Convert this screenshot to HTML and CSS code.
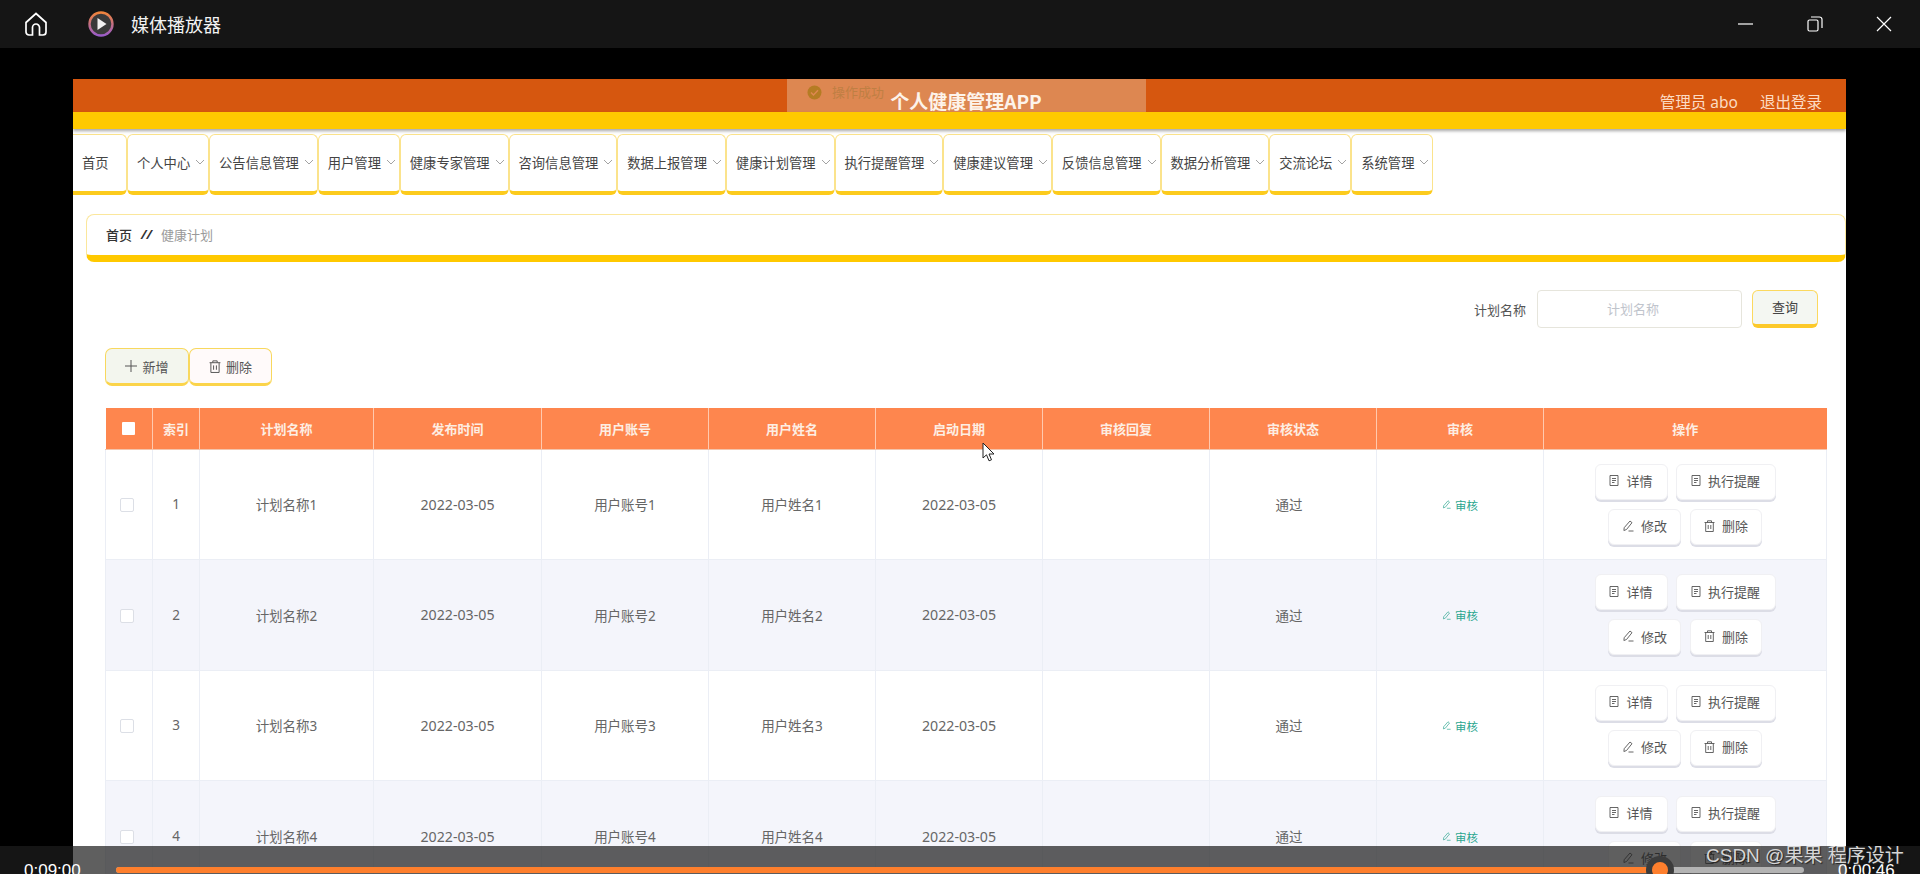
FILE: index.html
```html
<!DOCTYPE html>
<html>
<head>
    <meta charset="utf-8">
    <title>媒体播放器</title>
    <link rel="stylesheet" href="styles.css">
</head>
<body>
<svg class="sprite" width="0" height="0">
    <symbol id="doc" viewBox="0 0 10 11"><path d="M1 .5h8v10H1zM3 3.500h4M3 5.500h4M3 7.500h2.500" fill="none" stroke="currentColor" stroke-width=".9"/></symbol>
    <symbol id="pen" viewBox="0 0 12 12"><path d="M8 1l2 1.700-5.500 6.800-2.600 1 .3-2.800zM6.500 11h5" fill="none" stroke="currentColor" stroke-width=".9"/></symbol>
    <symbol id="bin" viewBox="0 0 11 12"><path d="M.5 2.500h10M3.500 2.500V.8h4v1.700M1.700 2.500v9h7.600v-9M4.200 5v4M6.800 5v4" fill="none" stroke="currentColor" stroke-width=".9"/></symbol>
    <symbol id="arrow" viewBox="0 0 10 6"><path d="M1 1l4 4 4-4" fill="none" stroke="currentColor" stroke-width=".9"/></symbol>
</svg>

<div class="titlebar">
    <svg class="home" width="24" height="24" viewBox="0 0 24 24"><path d="M2 10.500L12 1.500l10 9V20a3 3 0 0 1-3 3h-3.500v-7.500a3.500 3.500 0 0 0-7 0V23H5a3 3 0 0 1-3-3z" fill="none" stroke="#fff" stroke-width="1.700"/></svg>
    <svg class="logo" width="26" height="26" viewBox="0 0 26 26">
        <defs><linearGradient id="ring" x1="0" y1="0" x2="0" y2="1"><stop offset="0" stop-color="#f0843c"/><stop offset="1" stop-color="#9a5cc8"/></linearGradient></defs>
        <circle cx="13" cy="13" r="11.500" fill="#3a3a3a" stroke="url(#ring)" stroke-width="2.400"/>
        <path d="M9.500 7l9 6-9 6z" fill="#f2f2f2"/>
    </svg>
    <span class="apptitle">媒体播放器</span>
    <div class="winbtns">
        <svg width="16" height="16" viewBox="0 0 16 16"><path d="M0 8h15" stroke="#fff" stroke-width="1.200"/></svg>
        <svg width="16" height="16" viewBox="0 0 16 16"><path d="M1 5.500a1.500 1.500 0 0 1 1.500-1.500h7A1.500 1.500 0 0 1 11 5.500v8a1.500 1.500 0 0 1-1.500 1.500h-7A1.500 1.500 0 0 1 1 13.500zM4 1h8.500A2.500 2.500 0 0 1 15 3.500V12" fill="none" stroke="#fff" stroke-width="1.200"/></svg>
        <svg width="16" height="16" viewBox="0 0 16 16"><path d="M1 1l14 14M15 1L1 15" stroke="#fff" stroke-width="1.200"/></svg>
    </div>
</div>

<div class="page">
    <div class="header">
        <div class="toast">
            <svg width="15" height="15" viewBox="0 0 15 15"><circle cx="7.500" cy="7.500" r="7" fill="#b57c24"/><path d="M4 7.500l2.500 2.500L11 5.300" fill="none" stroke="#de8851" stroke-width="1.500"/></svg>
            <span>操作成功</span>
        </div>
        <div class="apphead">个人健康管理APP</div>
        <div class="userinfo">
            <span>管理员 abo</span>
            <span>退出登录</span>
        </div>
    </div>
    <div class="yellowbar"></div>

    <div class="nav">
        <div class="navitem first">首页</div>
        <div class="navitem">个人中心<svg class="caret"><use href="#arrow"/></svg></div>
        <div class="navitem">公告信息管理<svg class="caret"><use href="#arrow"/></svg></div>
        <div class="navitem">用户管理<svg class="caret"><use href="#arrow"/></svg></div>
        <div class="navitem">健康专家管理<svg class="caret"><use href="#arrow"/></svg></div>
        <div class="navitem">咨询信息管理<svg class="caret"><use href="#arrow"/></svg></div>
        <div class="navitem">数据上报管理<svg class="caret"><use href="#arrow"/></svg></div>
        <div class="navitem">健康计划管理<svg class="caret"><use href="#arrow"/></svg></div>
        <div class="navitem">执行提醒管理<svg class="caret"><use href="#arrow"/></svg></div>
        <div class="navitem">健康建议管理<svg class="caret"><use href="#arrow"/></svg></div>
        <div class="navitem">反馈信息管理<svg class="caret"><use href="#arrow"/></svg></div>
        <div class="navitem">数据分析管理<svg class="caret"><use href="#arrow"/></svg></div>
        <div class="navitem">交流论坛<svg class="caret"><use href="#arrow"/></svg></div>
        <div class="navitem">系统管理<svg class="caret"><use href="#arrow"/></svg></div>
    </div>

    <div class="crumb">
        <b>首页</b><b class="sep">//</b><span>健康计划</span>
    </div>

    <div class="search">
        <label>计划名称</label>
        <input type="text" placeholder="计划名称">
        <button class="querybtn">查询</button>
    </div>

    <div class="actions">
        <button class="actbtn add"><svg width="12" height="12" viewBox="0 0 12 12"><path d="M6 0v12M0 6h12" stroke="currentColor" stroke-width="1"/></svg>新增</button>
        <button class="actbtn del"><svg width="12" height="13"><use href="#bin"/></svg>删除</button>
    </div>

    <table class="grid">
        <colgroup>
            <col class="c-check"><col class="c-index"><col class="c-name">
            <col class="c-first"><col class="c-std"><col class="c-std"><col class="c-std">
            <col class="c-std"><col class="c-std"><col class="c-std"><col class="c-ops">
        </colgroup>
        <thead>
            <tr>
                <th><span class="headcheck"></span></th>
                <th>索引</th><th>计划名称</th><th>发布时间</th><th>用户账号</th><th>用户姓名</th>
                <th>启动日期</th><th>审核回复</th><th>审核状态</th><th>审核</th><th>操作</th>
            </tr>
        </thead>
        <tbody>
            <tr>
                <td class="checkcell"><span class="rowcheck"></span></td>
                <td>1</td><td>计划名称1</td><td class="date">2022-03-05</td><td>用户账号1</td><td>用户姓名1</td>
                <td class="date">2022-03-05</td><td></td><td class="status">通过</td>
                <td><span class="audit"><svg width="9" height="9"><use href="#pen"/></svg>审核</span></td>
                <td><div class="ops">
                    <button class="opbtn w73"><svg width="10" height="11"><use href="#doc"/></svg>详情</button>
                    <button class="opbtn w100"><svg width="10" height="11"><use href="#doc"/></svg>执行提醒</button>
                    <button class="opbtn w73"><svg width="12" height="12"><use href="#pen"/></svg>修改</button>
                    <button class="opbtn w72"><svg width="11" height="12"><use href="#bin"/></svg>删除</button>
                </div></td>
            </tr>
            <tr>
                <td class="checkcell"><span class="rowcheck"></span></td>
                <td>2</td><td>计划名称2</td><td class="date">2022-03-05</td><td>用户账号2</td><td>用户姓名2</td>
                <td class="date">2022-03-05</td><td></td><td class="status">通过</td>
                <td><span class="audit"><svg width="9" height="9"><use href="#pen"/></svg>审核</span></td>
                <td><div class="ops">
                    <button class="opbtn w73"><svg width="10" height="11"><use href="#doc"/></svg>详情</button>
                    <button class="opbtn w100"><svg width="10" height="11"><use href="#doc"/></svg>执行提醒</button>
                    <button class="opbtn w73"><svg width="12" height="12"><use href="#pen"/></svg>修改</button>
                    <button class="opbtn w72"><svg width="11" height="12"><use href="#bin"/></svg>删除</button>
                </div></td>
            </tr>
            <tr>
                <td class="checkcell"><span class="rowcheck"></span></td>
                <td>3</td><td>计划名称3</td><td class="date">2022-03-05</td><td>用户账号3</td><td>用户姓名3</td>
                <td class="date">2022-03-05</td><td></td><td class="status">通过</td>
                <td><span class="audit"><svg width="9" height="9"><use href="#pen"/></svg>审核</span></td>
                <td><div class="ops">
                    <button class="opbtn w73"><svg width="10" height="11"><use href="#doc"/></svg>详情</button>
                    <button class="opbtn w100"><svg width="10" height="11"><use href="#doc"/></svg>执行提醒</button>
                    <button class="opbtn w73"><svg width="12" height="12"><use href="#pen"/></svg>修改</button>
                    <button class="opbtn w72"><svg width="11" height="12"><use href="#bin"/></svg>删除</button>
                </div></td>
            </tr>
            <tr>
                <td class="checkcell"><span class="rowcheck"></span></td>
                <td>4</td><td>计划名称4</td><td class="date">2022-03-05</td><td>用户账号4</td><td>用户姓名4</td>
                <td class="date">2022-03-05</td><td></td><td class="status">通过</td>
                <td><span class="audit"><svg width="9" height="9"><use href="#pen"/></svg>审核</span></td>
                <td><div class="ops">
                    <button class="opbtn w73"><svg width="10" height="11"><use href="#doc"/></svg>详情</button>
                    <button class="opbtn w100"><svg width="10" height="11"><use href="#doc"/></svg>执行提醒</button>
                    <button class="opbtn w73"><svg width="12" height="12"><use href="#pen"/></svg>修改</button>
                    <button class="opbtn w72"><svg width="11" height="12"><use href="#bin"/></svg>删除</button>
                </div></td>
            </tr>
        </tbody>
    </table>
</div>

<svg class="cursor" width="14" height="20" viewBox="0 0 14 20"><path d="M1 1v15l3.500-3.200 2.500 6 2.500-1-2.500-5.800h5z" fill="#fff" stroke="#222" stroke-width="1"/></svg>

<div class="controls">
    <span class="time start">0:09:00</span>
    <div class="track">
        <div class="fill"></div>
        <div class="thumb"></div>
    </div>
    <span class="time end">0:00:46</span>
    <div class="mark">CSDN @果果 程序设计</div>
</div>
</body>
</html>
```

FILE: styles.css
```css
*{
    box-sizing: border-box;
}
html, body{
    height: 874px;
    overflow: hidden;
}
body{
    margin: 0;
    background: #000;
    position: relative;
    font-family: "Noto Sans", "Noto Sans CJK SC", sans-serif;
    font-size: 13px;
}
button{
    font-family: inherit;
}
.sprite{
    position: absolute;
}

/* player title bar */
.titlebar{
    height: 48px;
    background: #151515;
    display: flex;
    align-items: center;
    padding-left: 24px;
}
.logo{
    margin-left: 40px;
}
.apptitle{
    margin-left: 17px;
    color: #f2f2f2;
    font-size: 18px;
    font-family: "Noto Sans CJK SC", sans-serif;
}
.winbtns{
    margin-left: auto;
    margin-right: 28px;
    display: flex;
    gap: 53px;
}

/* the recorded page */
.page{
    margin: 31px 74px 0 73px;
    height: 795px;
    background: #fff;
    overflow: hidden;
}
.header{
    height: 33px;
    background: #d6570f;
    display: grid;
    grid-template-columns: 1fr auto 1fr;
    align-items: end;
    position: relative;
}
.toast{
    position: absolute;
    left: 714px;
    top: 0;
    width: 359px;
    height: 34px;
    background: rgba(240, 249, 235, .3);
    display: flex;
    align-items: center;
    gap: 10px;
    padding: 0 0 8px 20px;
    color: #bf7f43;
    font-size: 13px;
    line-height: 18px;
}
.apphead{
    grid-column: 2;
    margin-left: 13px;
    position: relative;
    color: #fdf3ea;
    font-size: 19px;
    font-weight: 700;
    line-height: 24px;
    margin-bottom: -1px;
    font-family: "Noto Sans CJK SC", sans-serif;
}
.userinfo{
    grid-column: 3;
    justify-self: end;
    display: flex;
    gap: 22px;
    padding-right: 24px;
    color: #fcdcc4;
    font-size: 15.500px;
    line-height: 22px;
    margin-bottom: -1px;
}
.yellowbar{
    height: 17px;
    background: #ffc900;
    box-shadow: 0 2px 3px rgba(0, 0, 0, .35);
    position: relative;
}

.nav{
    display: flex;
    margin-top: 5px;
}
.navitem{
    height: 61px;
    padding: 0 2.900px 2px 9px;
    display: flex;
    align-items: center;
    color: #444;
    font-size: 13.300px;
    background: #fff;
    border: 1px solid #fbe38c;
    border-bottom: 4px solid #fccb1d;
    border-radius: 6px;
}
.navitem.first{
    width: 54px;
    padding-left: 9px;
    border-left: 0;
    border-radius: 0 6px 6px 0;
}
.caret{
    width: 10px;
    height: 6px;
    margin-left: 5px;
    color: #999;
}

.crumb{
    margin: 19px 0 0 13px;
    height: 48px;
    padding: 0 0 2px 19px;
    display: flex;
    align-items: center;
    background: #fff;
    border: 1px solid #fbe79c;
    border-bottom: 7px solid #ffc900;
    border-radius: 8px;
    color: #999;
    font-size: 13px;
}
.crumb b{
    color: #333;
    font-weight: 500;
}
.crumb .sep{
    margin: 0 9px;
    font-style: italic;
    font-weight: 700;
}

.search{
    margin-top: 28px;
    padding-right: 28px;
    display: flex;
    justify-content: flex-end;
    align-items: center;
    color: #555;
}
.search label{
    margin-right: 11px;
}
.search input{
    width: 205px;
    height: 38px;
    padding: 0 13px 0 0;
    text-align: center;
    border: 1px solid #e6e5dc;
    border-radius: 4px;
    font-family: inherit;
    font-size: 13px;
    outline: none;
}
.search input::placeholder{
    color: #c0c4cc;
}
.querybtn{
    width: 66px;
    height: 38px;
    margin-left: 10px;
    padding: 0 0 3px;
    background: #f4f7f2;
    border: 1px solid #fbd95f;
    border-bottom: 4px solid #fcc92a;
    border-radius: 6px;
    color: #444;
    font-size: 13px;
}

.actions{
    margin: 20px 0 0 32px;
    display: flex;
}
.actbtn{
    width: 84px;
    height: 38px;
    padding: 0;
    display: flex;
    align-items: center;
    justify-content: center;
    gap: 5px;
    border: 1px solid #f8d85e;
    border-bottom: 3px solid #fbd44a;
    border-radius: 7px;
    color: #555;
    font-size: 13px;
}
.actbtn.add{
    background: #f3f6ee;
}
.actbtn.del{
    width: 83px;
    background: #fffafa;
}

.grid{
    margin: 22px 0 0 32px;
    width: 1721px;
    table-layout: fixed;
    border-collapse: collapse;
}
.c-check{ width: 47px; }
.c-index{ width: 47px; }
.c-name{ width: 174px; }
.c-first{ width: 168px; }
.c-std{ width: 167px; }
.c-ops{ width: 283px; }
.grid th{
    height: 41px;
    padding: 0;
    background: #fe864e;
    color: #fdeee3;
    font-size: 13px;
    font-weight: 700;
    border-right: 1px solid #ffc9ae;
    border-bottom: 1px solid #f3c4ac;
}
.grid th:last-child{
    border-right: 0;
}
.grid td{
    height: 110.600px;
    padding: 0;
    text-align: center;
    color: #666;
    font-size: 13.500px;
    border: 1px solid #ebeef5;
}
.grid td.date{
    font-size: 14.200px;
}
.grid td.status{
    padding-right: 8px;
}
.grid tbody tr:nth-child(even) td{
    background: #f4f5fb;
}
.headcheck{
    display: block;
    width: 13px;
    height: 13px;
    margin: 1px auto 0;
    background: #fff;
    border-radius: 1px;
}
.grid td.checkcell{
    padding: 2px 4px 0 0;
}
.rowcheck{
    display: block;
    width: 14px;
    height: 14px;
    margin: 0 auto;
    background: #fff;
    border: 1px solid #dcdfe6;
    border-radius: 2px;
}
.audit{
    display: inline-flex;
    align-items: center;
    gap: 4px;
    color: #2ba68f;
    font-size: 11.500px;
}
.ops{
    width: 190px;
    margin: 0 auto;
    display: flex;
    flex-wrap: wrap;
    justify-content: center;
    gap: 9px 8px;
}
.opbtn{
    height: 36px;
    padding: 0 0 2px;
    display: flex;
    align-items: center;
    justify-content: center;
    gap: 7px;
    background: #fff;
    border: 1px solid #f0f0f3;
    border-radius: 6px;
    box-shadow: 0 2px 0 #dcdde6;
    color: #555;
    font-size: 13px;
}
.w73{ width: 73px; }
.w100{ width: 100px; }
.w72{ width: 72px; margin-left: 1px; }

.cursor{
    position: absolute;
    left: 982px;
    top: 442px;
}

/* playback bar drawn over the video */
.controls{
    position: absolute;
    left: 0;
    right: 0;
    bottom: 0;
    height: 28px;
    background: rgba(30, 30, 30, .71);
    overflow: hidden;
    display: flex;
}
.time{
    color: #fff;
    font-family: "Liberation Sans", sans-serif;
    font-size: 17px;
    line-height: 20px;
    margin-top: 15px;
}
.time.start{
    width: 116px;
    padding-left: 24px;
}
.time.end{
    margin-left: 34px;
}
.track{
    width: 1688px;
    height: 6px;
    margin-top: 21px;
    background: #b3b3b3;
    border-radius: 3px;
    position: relative;
}
.fill{
    width: 1544px;
    height: 6px;
    background: #fe7f2d;
    border-radius: 3px;
}
.thumb{
    position: absolute;
    left: 1530px;
    top: -11px;
    width: 28px;
    height: 28px;
    background: #fe7f2d;
    border: 6px solid #3c3c3c;
    border-radius: 50%;
}
.mark{
    position: absolute;
    left: 1706px;
    top: -2px;
    color: #d6d6d6;
    font-size: 19px;
    line-height: 24px;
    font-family: "Liberation Sans", "Noto Sans CJK SC", sans-serif;
    text-shadow: 1px 1px 1px #222;
    white-space: nowrap;
}
```
